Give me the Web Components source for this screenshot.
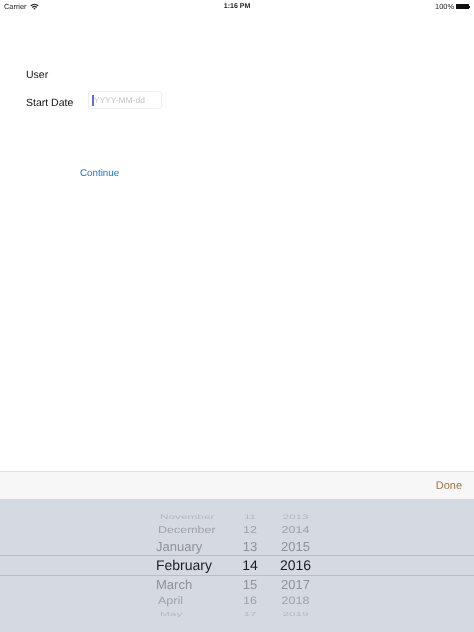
<!DOCTYPE html>
<html lang="en">
<head>
  <meta charset="UTF-8">
  <title>Start Date</title>
  <style>
    html, body { margin: 0; height: 100%; background: #fff; }
    body { font-family: "Liberation Sans", Arial, sans-serif; overflow: hidden; text-rendering: geometricPrecision; }
  </style>
</head>
<body>
  <app-screen>
    <status-bar></status-bar>
    <date-form></date-form>
    <date-picker></date-picker>
  </app-screen>

  <script>
    // Page frame: status bar on top, form in the middle, picker at the bottom
    class AppScreen extends HTMLElement {
      constructor() {
        super();
        this.attachShadow({ mode: 'open' }).innerHTML = `
          <style>
            /* the reference is a soft, scaled down capture */
            :host { display: flex; flex-direction: column; height: 632px; width: 474px; filter: blur(0.3px); }
            ::slotted(date-form) { flex: 1; }
          </style>
          <slot></slot>`;
      }
    }

    class StatusBar extends HTMLElement {
      constructor() {
        super();
        this.attachShadow({ mode: 'open' }).innerHTML = `
          <style>
            :host {
              display: grid; grid-template-columns: 1fr auto 1fr; align-items: center;
              height: 13px; padding: 0 4px; font-size: 7.4px; color: #222;
            }
            .left { display: flex; align-items: center; gap: 3px; }
            .right { display: flex; align-items: center; justify-content: flex-end; gap: 2px; }
            .time { font-weight: bold; font-size: 7px; }
            .battery { display: flex; align-items: center; }
            .cell { width: 13px; height: 5px; background: #111; }
            .tip { width: 1px; height: 2px; background: #111; }
          </style>
          <div class="left">
            <span>Carrier</span>
            <svg width="9" height="7" viewBox="0 0 9 7">
              <path d="M0.3 2.4 A6 6 0 0 1 8.7 2.4 L7.8 3.3 A4.8 4.8 0 0 0 1.2 3.3Z" fill="#222"/>
              <path d="M1.9 4 A3.8 3.8 0 0 1 7.1 4 L6.2 4.9 A2.5 2.5 0 0 0 2.8 4.9Z" fill="#222"/>
              <path d="M3.4 5.5 A1.6 1.6 0 0 1 5.6 5.5 L4.5 6.8Z" fill="#222"/>
            </svg>
          </div>
          <span class="time">1:16 PM</span>
          <div class="right">
            <span>100%</span>
            <div class="battery"><div class="cell"></div><div class="tip"></div></div>
          </div>`;
      }
    }

    class DateForm extends HTMLElement {
      constructor() {
        super();
        this.attachShadow({ mode: 'open' }).innerHTML = `
          <style>
            :host { display: block; padding: 55px 0 0 26px; font-size: 10.5px; color: #111; }
            .row { display: flex; }
            .user { height: 14px; align-items: center; }
            .date { margin-top: 9px; height: 20px; gap: 15px; align-items: flex-start; }
            .date span.label { padding-top: 6px; line-height: 12px; }
            .field {
              box-sizing: border-box; width: 74px; height: 18px;
              border: 1px solid #eceef2; border-radius: 3px;
              display: flex; align-items: center; padding-left: 3px;
              font-size: 8.5px; color: #c4c4ca;
            }
            .caret { width: 1.5px; height: 11px; background: #5a6ee0; flex: none; }
            .continue { margin: 56px 0 0 54px; font-size: 9.8px; line-height: 13px; color: #127ce6; }
          </style>
          <div class="row user">User</div>
          <div class="row date">
            <span class="label">Start Date</span>
            <div class="field"><span class="caret"></span><span>YYYY-MM-dd</span></div>
          </div>
          <div class="continue">Continue</div>`;
      }
    }

    // One line of the wheel. Size, squash and colour come from attributes.
    class PickerRow extends HTMLElement {
      constructor() {
        super();
        const size = this.getAttribute('size') || 13;
        const squash = this.getAttribute('squash') || 1;
        const color = this.getAttribute('color') || '#999';
        const height = this.getAttribute('height') || 19;
        const indent = this.getAttribute('indent') || 156;
        this.attachShadow({ mode: 'open' }).innerHTML = `
          <style>
            :host {
              display: block; box-sizing: border-box; height: ${height}px;
              font-size: ${size}px; color: ${color};
            }
            :host([selected]) {
              border-top: 1px solid #b9bdc6; border-bottom: 1px solid #b9bdc6; padding-bottom: 1px;
            }
            .line {
              height: 100%;
              display: grid; grid-template-columns: 235px 30px 61px;
              align-items: center; white-space: nowrap; line-height: 1;
              transform: scaleY(${squash});
            }
            .month { padding-left: ${indent}px; }
            .num { text-align: center; }
          </style>
          <div class="line">
            <span class="month"><slot name="month"></slot></span>
            <span class="num"><slot name="day"></slot></span>
            <span class="num"><slot name="year"></slot></span>
          </div>`;
      }
    }

    class DatePicker extends HTMLElement {
      constructor() {
        super();
        const rows = [
          ['November', '11', '2013', 11.8, 0.55, '#b5b8c0', 12, 160],
          ['December', '12', '2014', 12.5, 0.8, '#9fa2aa', 14, 158],
          ['January', '13', '2015', 13, 1, '#8f9299', 18, 156],
          ['February', '14', '2016', 14, 1, '#1c1c20', 21, 156],
          ['March', '15', '2017', 13, 1, '#8f9299', 17, 156],
          ['April', '16', '2018', 12.5, 0.85, '#9fa2aa', 17, 158],
          ['May', '17', '2019', 11.8, 0.5, '#b5b8c0', 6, 160]
        ];
        const html = rows.map((r, i) => `
          <picker-row size="${r[3]}" squash="${r[4]}" color="${r[5]}" height="${r[6]}" indent="${r[7]}" ${i === 3 ? 'selected' : ''}>
            <span slot="month">${r[0]}</span><span slot="day">${r[1]}</span><span slot="year">${r[2]}</span>
          </picker-row>`).join('');
        this.attachShadow({ mode: 'open' }).innerHTML = `
          <style>
            :host { display: block; }
            .bar {
              box-sizing: border-box; height: 28px; background: #f7f7f8; border-top: 1px solid #e0e0e2;
              display: flex; align-items: center; justify-content: flex-end; padding-right: 12px;
              font-size: 11px; color: #9c7440;
            }
            .wheel { height: 133px; background: #d5d9e2; padding-top: 12px; box-sizing: border-box; overflow: hidden; }
          </style>
          <div class="bar">Done</div>
          <div class="wheel">${html}</div>`;
      }
    }

    customElements.define('app-screen', AppScreen);
    customElements.define('status-bar', StatusBar);
    customElements.define('date-form', DateForm);
    customElements.define('picker-row', PickerRow);
    customElements.define('date-picker', DatePicker);
  </script>
</body>
</html>
